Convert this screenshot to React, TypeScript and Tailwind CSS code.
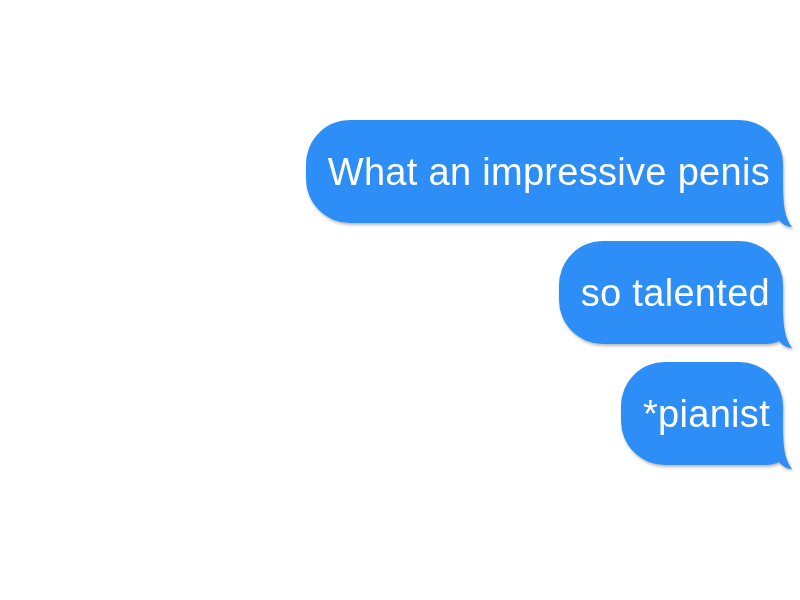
import React from 'react'

const messages = ['What an impressive penis', 'so talented', '*pianist']

const Bubble: React.FC<{ text: string }> = ({ text }) => (
  <div className="relative drop-shadow-[1px_2px_1.5px_rgba(0,0,0,0.28)]">
    <div className="h-[103px] flex items-center rounded-[44px] rounded-br-[20px] bg-[#2c8ef6] pl-[22px] pr-[13px]">
      <span className="text-white text-[38px] leading-none tracking-[0.3px] font-['Liberation_Sans',Arial,sans-serif] whitespace-nowrap">
        {text}
      </span>
    </div>
    <svg
      className="absolute right-[-10px] bottom-[-5px]"
      width="30"
      height="44"
      viewBox="0 0 30 44"
    >
      <path
        d="M0 0 H20 C20 22 22 34 29 43 C24 43 19 40 16 36 C13 38 8 39 0 39 Z"
        fill="#2c8ef6"
      />
    </svg>
  </div>
)

const App: React.FC = () => {
  return (
    <div className="w-[800px] h-[600px] bg-white flex flex-col items-end gap-[18px] pt-[120px] pr-[17px]">
      {messages.map((m) => (
        <Bubble key={m} text={m} />
      ))}
    </div>
  )
}

export default App
